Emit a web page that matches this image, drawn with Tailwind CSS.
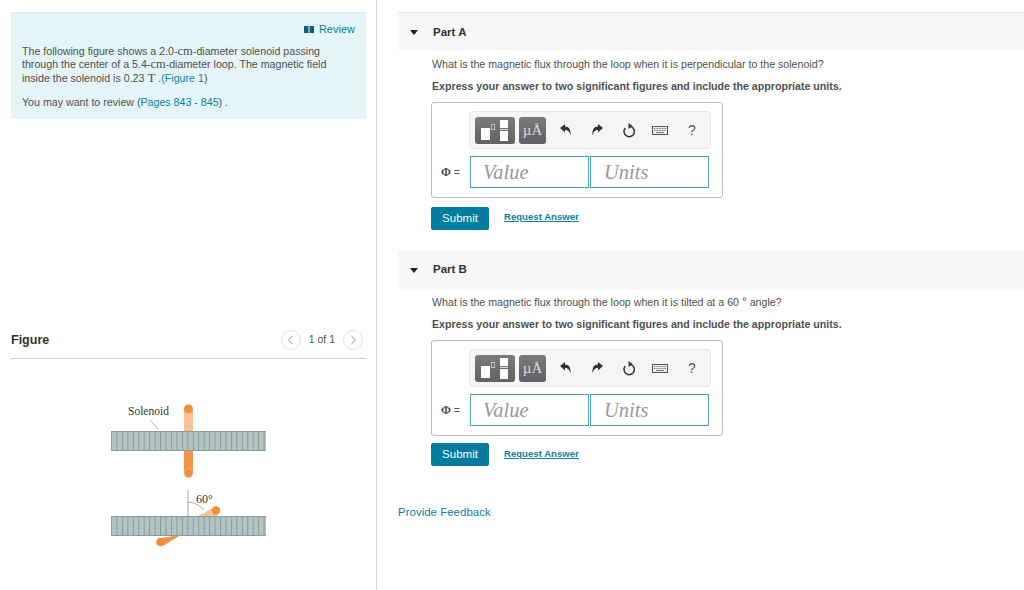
<!DOCTYPE html>
<html><head><meta charset="utf-8"><script src="https://cdn.jsdelivr.net/npm/@tailwindcss/browser@4"></script></head>
<body class="bg-white">
<div class="w-[1024px] h-[590px] overflow-hidden flex font-['Liberation_Sans',Arial,sans-serif] text-[#4f4f4f]">
  <div class="w-[377px] h-[590px] shrink-0 border-r border-[#c7d6e4] pt-3 pl-[11px] pr-[10px]">
    <div class="h-[107px] bg-[#e5f5f7] border-t border-[#dfe8ea] pl-[11px] pr-[11px]">
      <div class="h-[30px] flex justify-end items-center gap-[5px] pt-[3px] text-[#0f7f9e] text-[11px]">
        <svg width="10" height="7" viewBox="0 0 10 7"><path d="M0 0h4.500v7H0zM5.500 0H10v7H5.500z" fill="#0d5f78"/></svg>
        <span>Review</span>
      </div>
      <p class="text-[10.65px] leading-[13px] w-[325px] mt-[2px]">The following figure shows a 2.0-<span class="font-['Liberation_Serif',serif] text-[12.5px] leading-none">cm</span>-diameter solenoid passing through the center of a 5.4-<span class="font-['Liberation_Serif',serif] text-[12.5px] leading-none">cm</span>-diameter loop. The magnetic field inside the solenoid is 0.23 <span class="font-['Liberation_Serif',serif] text-[13px] leading-none">T</span> .<span class="text-[#0f7f9e]">(Figure 1</span>)</p>
      <p class="text-[10.65px] leading-[13px] mt-[11px]">You may want to review (<span class="text-[#0f7f9e]">Pages 843 - 845</span>) .</p>
    </div>
    <div class="mt-[208px] h-[32px] flex items-center border-b border-[#cfcfcf] pb-[5px] w-[355px]">
      <span class="font-bold text-[12.5px] text-[#333]">Figure</span>
      <div class="ml-auto mr-[3px] flex items-center gap-[8px] text-[10.5px]">
        <span class="w-[20px] h-[20px] rounded-full border border-[#e3e3e3] flex items-center justify-center"><svg width="7" height="10" viewBox="0 0 7 10"><path d="M5.500 1 1.500 5l4 4" fill="none" stroke="#c4c4c4" stroke-width="1.400"/></svg></span>
        <span>1 of 1</span>
        <span class="w-[20px] h-[20px] rounded-full border border-[#e3e3e3] flex items-center justify-center"><svg width="7" height="10" viewBox="0 0 7 10"><path d="M1.500 1 5.500 5l-4 4" fill="none" stroke="#c4c4c4" stroke-width="1.400"/></svg></span>
      </div>
    </div>
    <svg class="block -ml-[11px] mt-[36px]" width="300" height="195" viewBox="0 395 300 195">
      <defs><pattern id="st" x="111" y="0" width="5.45" height="20" patternUnits="userSpaceOnUse"><rect width="5.45" height="20" fill="#b4c4c2"/><rect width="1" height="20" fill="#8b9b9a"/></pattern></defs>
      <rect x="184" y="409" width="9" height="23" fill="#f7c49a"/>
      <circle cx="188.500" cy="409" r="4.500" fill="#ee8f3c"/>
      <rect x="184" y="450" width="9" height="23" fill="#ee9646"/>
      <circle cx="188.500" cy="473" r="4.500" fill="#ee8f3c" stroke="#f9c08c" stroke-width=".8"/>
      <rect x="111" y="431" width="155" height="20" fill="url(#st)"/>
      <path d="M111 431.500h155M111 450.500h155" stroke="#8b9b9a" stroke-width="1"/>
      <text x="128" y="415" font-family="Liberation Serif" font-size="11.500" fill="#333">Solenoid</text>
      <path d="M150 420l8 9" stroke="#888" stroke-width=".7"/>
      <path d="M188 490v26" stroke="#aaa" stroke-width="1"/>
      <path d="M188 502q10 1 16 8" fill="none" stroke="#888" stroke-width=".7"/>
      <text x="196" y="503" font-family="Liberation Serif" font-size="12" fill="#333">60°</text>
      <path d="M198.300 516 215 506.500 217 516z" fill="#f7c49a"/>
      <circle cx="216" cy="510.500" r="4.300" fill="#ee8f3c"/>
      <rect x="111" y="516" width="155" height="20" fill="url(#st)"/>
      <path d="M111 516.500h155M111 535.500h155" stroke="#8b9b9a" stroke-width="1"/>
      <path d="M158 538.500 174 536h5l-15.500 9.700z" fill="#ee9646"/>
      <circle cx="160.500" cy="542" r="4.300" fill="#ee8f3c"/>
    </svg>
  </div>

  <div class="pl-[21px] flex-1 min-w-0 pt-3">
    <section class="border-t border-[#e4e4e4]">
      <div class="h-[38px] bg-[#f8f8f8] flex items-center font-bold text-[11.5px] text-[#333] pt-[1px]">
        <svg class="ml-[12px] mr-[15px]" width="8" height="5" viewBox="0 0 8 5"><path d="M0 0h8L4 5z" fill="#222"/></svg>
        <span>Part A</span>
      </div>
      <div class="pl-[33px]">
        <p class="text-[10.65px] leading-[13px] mt-[7px] pl-[1px]">What is the magnetic flux through the loop when it is perpendicular to the solenoid?</p>
        <p class="text-[10.65px] leading-[13px] mt-[9px] pl-[1px] font-bold">Express your answer to two significant figures and include the appropriate units.</p>
        <div class="mt-[9px] w-[292px] h-[96px] border border-[#bdbdbd] rounded-[3px] pl-[37px] pt-[8px]">
          <div class="w-[242px] h-[38px] bg-[#f5f5f5] border border-[#e8e8e8] rounded-[4px] flex items-center pl-[5px]">
            <span class="w-[40px] h-[27px] rounded-[3px] bg-gradient-to-b from-[#7b7a7d] to-[#616064] flex items-center justify-center gap-[2px]">
              <svg width="28" height="21" viewBox="0 0 28 21"><path d="M0 8h9v12H0zM10 4h4v6h-4z" fill="#fff"/><path d="M10.500 4.500h3v5h-3z" fill="#6e6d70" /><path d="M19 0h8v8h-8zM19 11h8v10h-8z" fill="#fff"/><path d="M19 9.500h8" stroke="#ddd"/></svg>
            </span>
            <span class="w-[27px] h-[27px] ml-[4px] rounded-[3px] bg-gradient-to-b from-[#7b7a7d] to-[#616064] flex items-center justify-center font-['Liberation_Serif',serif] text-[#dcdcdc] text-[15px]">µÅ</span>
            <svg class="ml-[14px]" width="11" height="12" viewBox="0 0 11 12"><path d="M0 4 5 0v2.500c4 0 6 3 5.500 9C9.500 7.500 8 6 5 6v2.500z" fill="#333"/></svg>
            <svg class="ml-[21px]" width="11" height="12" viewBox="0 0 11 12"><path d="M11 4 6 0v2.500C2 2.500 0 5.500.5 11.500 1.500 7.500 3 6 6 6v2.500z" fill="#333"/></svg>
            <svg class="ml-[19px]" width="14" height="15" viewBox="0 0 14 15"><path d="M8 3.300A5.200 5.200 0 1 1 3.300 5" fill="none" stroke="#333" stroke-width="1.500"/><path d="M6.500 0v6l4-3z" fill="#333"/></svg>
            <svg class="ml-[16px]" width="16" height="9" viewBox="0 0 16 9"><rect x=".5" y=".5" width="15" height="8" fill="#eee" stroke="#555"/><path d="M2 2.500h12M2 4.500h12" stroke="#777" stroke-dasharray="1 .6"/><path d="M4 6.500h8" stroke="#777"/></svg>
            <span class="ml-[20px] text-[14px] text-[#555]">?</span>
          </div>
          <div class="flex mt-[7px] items-center -ml-[28px]">
            <span class="w-[29px] text-[10.5px]"><span class="font-['Liberation_Serif',serif] font-bold text-[12px]">Φ</span> =</span>
            <span class="w-[119px] h-[32px] border border-[#4d9fb5] pl-[12px] flex items-center font-['Liberation_Serif',serif] italic text-[20.5px] text-[#999]">Value</span>
            <span class="w-[119px] h-[32px] ml-[1px] border border-[#4d9fb5] pl-[13px] flex items-center font-['Liberation_Serif',serif] italic text-[20.5px] text-[#999]">Units</span>
          </div>
        </div>
        <div class="flex items-center mt-[9px]">
          <span class="w-[58px] h-[23px] rounded-[2px] bg-[#007c9e] text-white text-[11.5px] flex items-center justify-center">Submit</span>
          <span class="ml-[15px] text-[9.6px] font-bold underline text-[#0f7f9e] -mt-[2px]">Request Answer</span>
        </div>
      </div>
    </section>
    <section class="mt-[21px]">
      <div class="h-[38px] bg-[#f8f8f8] flex items-center font-bold text-[11.5px] text-[#333]">
        <svg class="ml-[12px] mr-[15px]" width="8" height="5" viewBox="0 0 8 5"><path d="M0 0h8L4 5z" fill="#222"/></svg>
        <span>Part B</span>
      </div>
      <div class="pl-[33px]">
        <p class="text-[10.65px] leading-[13px] mt-[7px] pl-[1px]">What is the magnetic flux through the loop when it is tilted at a 60 <span class="text-[12px]">°</span> angle?</p>
        <p class="text-[10.65px] leading-[13px] mt-[9px] pl-[1px] font-bold">Express your answer to two significant figures and include the appropriate units.</p>
        <div class="mt-[9px] w-[292px] h-[96px] border border-[#bdbdbd] rounded-[3px] pl-[37px] pt-[8px]">
          <div class="w-[242px] h-[38px] bg-[#f5f5f5] border border-[#e8e8e8] rounded-[4px] flex items-center pl-[5px]">
            <span class="w-[40px] h-[27px] rounded-[3px] bg-gradient-to-b from-[#7b7a7d] to-[#616064] flex items-center justify-center gap-[2px]">
              <svg width="28" height="21" viewBox="0 0 28 21"><path d="M0 8h9v12H0zM10 4h4v6h-4z" fill="#fff"/><path d="M10.500 4.500h3v5h-3z" fill="#6e6d70" /><path d="M19 0h8v8h-8zM19 11h8v10h-8z" fill="#fff"/><path d="M19 9.500h8" stroke="#ddd"/></svg>
            </span>
            <span class="w-[27px] h-[27px] ml-[4px] rounded-[3px] bg-gradient-to-b from-[#7b7a7d] to-[#616064] flex items-center justify-center font-['Liberation_Serif',serif] text-[#dcdcdc] text-[15px]">µÅ</span>
            <svg class="ml-[14px]" width="11" height="12" viewBox="0 0 11 12"><path d="M0 4 5 0v2.500c4 0 6 3 5.500 9C9.500 7.500 8 6 5 6v2.500z" fill="#333"/></svg>
            <svg class="ml-[21px]" width="11" height="12" viewBox="0 0 11 12"><path d="M11 4 6 0v2.500C2 2.500 0 5.500.5 11.500 1.500 7.500 3 6 6 6v2.500z" fill="#333"/></svg>
            <svg class="ml-[19px]" width="14" height="15" viewBox="0 0 14 15"><path d="M8 3.300A5.200 5.200 0 1 1 3.300 5" fill="none" stroke="#333" stroke-width="1.500"/><path d="M6.500 0v6l4-3z" fill="#333"/></svg>
            <svg class="ml-[16px]" width="16" height="9" viewBox="0 0 16 9"><rect x=".5" y=".5" width="15" height="8" fill="#eee" stroke="#555"/><path d="M2 2.500h12M2 4.500h12" stroke="#777" stroke-dasharray="1 .6"/><path d="M4 6.500h8" stroke="#777"/></svg>
            <span class="ml-[20px] text-[14px] text-[#555]">?</span>
          </div>
          <div class="flex mt-[7px] items-center -ml-[28px]">
            <span class="w-[29px] text-[10.5px]"><span class="font-['Liberation_Serif',serif] font-bold text-[12px]">Φ</span> =</span>
            <span class="w-[119px] h-[32px] border border-[#4d9fb5] pl-[12px] flex items-center font-['Liberation_Serif',serif] italic text-[20.5px] text-[#999]">Value</span>
            <span class="w-[119px] h-[32px] ml-[1px] border border-[#4d9fb5] pl-[13px] flex items-center font-['Liberation_Serif',serif] italic text-[20.5px] text-[#999]">Units</span>
          </div>
        </div>
        <div class="flex items-center mt-[7px]">
          <span class="w-[58px] h-[23px] rounded-[2px] bg-[#007c9e] text-white text-[11.5px] flex items-center justify-center">Submit</span>
          <span class="ml-[15px] text-[9.6px] font-bold underline text-[#0f7f9e]">Request Answer</span>
        </div>
      </div>
    </section>
    <p class="mt-[38px] text-[11.5px] text-[#0f7f9e]">Provide Feedback</p>
  </div>
</div>
</body></html>
